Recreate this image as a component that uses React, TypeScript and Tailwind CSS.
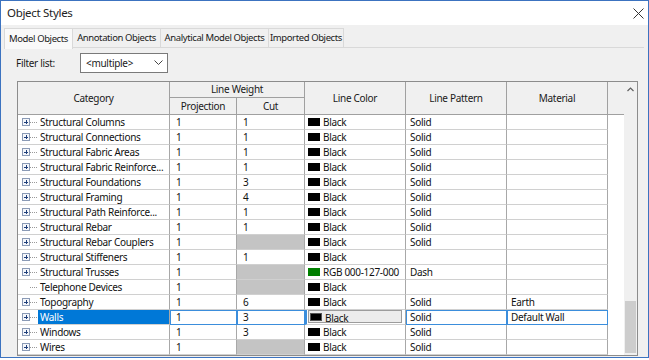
import React from 'react';

type Row = {
  name: string;
  proj: string;
  cut: string | null;
  color: string;
  swatch: string;
  pattern: string;
  material: string;
  expander?: boolean;
  selected?: boolean;
};

const ROWS: Row[] = [
  { name: 'Structural Columns', proj: '1', cut: '1', color: 'Black', swatch: '#000', pattern: 'Solid', material: '' },
  { name: 'Structural Connections', proj: '1', cut: '1', color: 'Black', swatch: '#000', pattern: 'Solid', material: '' },
  { name: 'Structural Fabric Areas', proj: '1', cut: '1', color: 'Black', swatch: '#000', pattern: 'Solid', material: '' },
  { name: 'Structural Fabric Reinforce...', proj: '1', cut: '1', color: 'Black', swatch: '#000', pattern: 'Solid', material: '' },
  { name: 'Structural Foundations', proj: '1', cut: '3', color: 'Black', swatch: '#000', pattern: 'Solid', material: '' },
  { name: 'Structural Framing', proj: '1', cut: '4', color: 'Black', swatch: '#000', pattern: 'Solid', material: '' },
  { name: 'Structural Path Reinforce...', proj: '1', cut: '1', color: 'Black', swatch: '#000', pattern: 'Solid', material: '' },
  { name: 'Structural Rebar', proj: '1', cut: '1', color: 'Black', swatch: '#000', pattern: 'Solid', material: '' },
  { name: 'Structural Rebar Couplers', proj: '1', cut: null, color: 'Black', swatch: '#000', pattern: 'Solid', material: '' },
  { name: 'Structural Stiffeners', proj: '1', cut: '1', color: 'Black', swatch: '#000', pattern: '', material: '' },
  { name: 'Structural Trusses', proj: '1', cut: null, color: 'RGB 000-127-000', swatch: '#007f00', pattern: 'Dash', material: '' },
  { name: 'Telephone Devices', proj: '1', cut: null, color: 'Black', swatch: '#000', pattern: '', material: '', expander: false },
  { name: 'Topography', proj: '1', cut: '6', color: 'Black', swatch: '#000', pattern: 'Solid', material: 'Earth' },
  { name: 'Walls', proj: '1', cut: '3', color: 'Black', swatch: '#000', pattern: 'Solid', material: 'Default Wall', selected: true },
  { name: 'Windows', proj: '1', cut: '3', color: 'Black', swatch: '#000', pattern: 'Solid', material: '' },
  { name: 'Wires', proj: '1', cut: null, color: 'Black', swatch: '#000', pattern: 'Solid', material: '' },
];

const editBox = 'outline outline-1 -outline-offset-1 outline-[#3b8edc]';

function Expander() {
  return (
    <div className="relative w-[8px] h-[8px] border border-[#8a9ab5] bg-[#f4f6fa] shrink-0">
      <div className="absolute left-[1px] top-[2.5px] w-[4px] h-[1px] bg-[#1f3f7a]" />
      <div className="absolute left-[2.5px] top-[1px] w-[1px] h-[4px] bg-[#1f3f7a]" />
    </div>
  );
}

function DataRow({ row }: { row: Row }) {
  const sel = row.selected;
  const hasExp = row.expander !== false;
  const cell = 'flex items-center whitespace-nowrap overflow-hidden border-r border-b border-r-[#a8a8a8] border-b-[#d0d0d0]';
  return (
    <div className="flex h-[15px] bg-white text-[#111]">
      {/* Category */}
      <div className={`w-[152px] ${cell}`}>
        <div className="w-[20px] h-full flex items-center pl-[4px] shrink-0">
          {hasExp ? <Expander /> : <div className="w-[8px]" />}
          <div className="w-[7px] border-t border-dotted border-[#9a9a9a]" />
        </div>
        <div className={`h-full flex-1 flex items-center pl-[2px] ${sel ? 'bg-[#0078d7] text-white' : ''}`}>
          {row.name}
        </div>
      </div>
      {/* Projection */}
      <div className={`w-[67px] pl-[6px] ${cell} ${sel ? editBox : ''}`}>{row.proj}</div>
      {/* Cut */}
      <div className={`w-[68px] pl-[6px] ${cell} ${row.cut === null ? 'bg-[#c4c4c4]' : ''} ${sel ? editBox : ''}`}>
        {row.cut}
      </div>
      {/* Line Color */}
      <div className={`w-[101px] ${cell} ${sel ? 'border-l-2 border-l-[#3b8edc] pl-[1px] pr-[3px] pb-[1px]' : 'pl-[3px]'}`}>
        {sel ? (
          <div className="flex-1 h-[13px] flex items-center pl-[1px] bg-[#ececec] border border-[#9c9c9c]">
            <div className="w-[12px] h-[8px] bg-black border border-[#555] mr-[3px]" />
            <span className="pt-[3px]">{row.color}</span>
          </div>
        ) : (
          <>
            <div className="w-[12px] h-[8px] mr-[3px] shrink-0" style={{ backgroundColor: row.swatch }} />
            <span>{row.color}</span>
          </>
        )}
      </div>
      {/* Line Pattern */}
      <div className={`w-[101px] pl-[4px] ${cell} ${sel ? editBox : ''}`}>{row.pattern}</div>
      {/* Material */}
      <div className={`w-[101px] pl-[4px] ${cell} ${sel ? editBox : ''}`}>{row.material}</div>
      <div className="w-[16px]" />
    </div>
  );
}

export default function App() {
  return (
    <div
      className="w-[649px] h-[360px] bg-white tracking-[-0.3px]"
      style={{ fontFamily: '"Noto Sans", "Open Sans", sans-serif' }}
    >
      <div className="w-[649px] h-[358px] border border-[#3c73c0] bg-[#f0f0f0] flex flex-col text-[10px] text-[#1a1a1a]">
        {/* Title bar */}
        <div className="h-[24px] bg-white flex items-center justify-between pl-[6px] pr-[3px] shrink-0">
          <span className="text-[11.5px] text-[#222]">Object Styles</span>
          <svg width="11" height="11" viewBox="0 0 11 11" className="mr-[1px]">
            <path d="M0.5 0.5 L10.5 10.5 M10.5 0.5 L0.5 10.5" stroke="#333" strokeWidth="1" />
          </svg>
        </div>

        {/* Tabs */}
        <div className="flex pl-[3px] pr-[4px] mt-[3px] h-[20px] items-end shrink-0 whitespace-nowrap text-[9.5px] tracking-[-0.4px]">
          <div className="w-[69px] h-[21px] flex items-center justify-center bg-[#f9f9f9] border border-b-0 border-[#d9d9d9] relative -mb-[1px] z-10">
            Model Objects
          </div>
          <div className="flex-1 flex items-end border-b border-[#d9d9d9] h-full">
            <div className="w-[88px] h-[19px] flex items-center justify-center border-t border-r border-[#d9d9d9]">Annotation Objects</div>
            <div className="w-[108px] h-[19px] flex items-center justify-center border-t border-r border-[#d9d9d9]">Analytical Model Objects</div>
            <div className="w-[75px] h-[19px] flex items-center justify-center border-t border-r border-[#d9d9d9]">Imported Objects</div>
          </div>
        </div>

        {/* Filter */}
        <div className="flex items-center mt-[5px] pl-[15px] h-[20px] shrink-0">
          <span className="w-[64px]">Filter list:</span>
          <div className="w-[88px] h-[20px] bg-white border border-[#7a7a7a] flex items-center justify-between pl-[5px] pr-[4px]">
            <span>&lt;multiple&gt;</span>
            <svg width="9" height="6" viewBox="0 0 9 6">
              <path d="M0.5 0.5 L4.5 4.5 L8.5 0.5" stroke="#444" strokeWidth="1" fill="none" />
            </svg>
          </div>
        </div>

        {/* Grid */}
        <div className="mt-[8px] ml-[16px] w-[621px] h-[275px] border border-[#8c8c8c] flex bg-white shrink-0">
          <div className="w-[606px] flex flex-col overflow-hidden">
            {/* Header */}
            <div className="grid grid-cols-[152px_67px_68px_101px_101px_101px_16px] grid-rows-[16px_17px] bg-[#f0f0f0] text-[#1a1a1a] shrink-0 whitespace-nowrap">
              <div className="row-span-2 flex items-center justify-center border-r border-b border-[#a0a0a0]">Category</div>
              <div className="col-span-2 flex items-center justify-center border-r border-b border-[#a0a0a0]">Line Weight</div>
              <div className="row-span-2 flex items-center justify-center border-r border-b border-[#a0a0a0]">Line Color</div>
              <div className="row-span-2 flex items-center justify-center border-r border-b border-[#a0a0a0]">Line Pattern</div>
              <div className="row-span-2 flex items-center justify-center border-r border-b border-[#a0a0a0]">Material</div>
              <div className="row-span-2 border-b border-[#a0a0a0]" />
              <div className="flex items-center justify-center border-r border-b border-[#a0a0a0]">Projection</div>
              <div className="flex items-center justify-center border-r border-b border-[#a0a0a0]">Cut</div>
            </div>
            {ROWS.map((r) => (
              <DataRow key={r.name} row={r} />
            ))}
          </div>
          {/* Scrollbar */}
          <div className="w-[13px] bg-[#f0f0f0] flex flex-col items-center">
            <svg width="7" height="5" viewBox="0 0 7 5" className="mt-[5px]">
              <path d="M0.5 4 L3.5 1 L6.5 4" stroke="#606060" strokeWidth="1.2" fill="none" />
            </svg>
            <div className="flex-1" />
            <div className="w-[11px] h-[52px] bg-[#cdcdcd] mb-[2px]" />
          </div>
        </div>
      </div>
    </div>
  );
}
